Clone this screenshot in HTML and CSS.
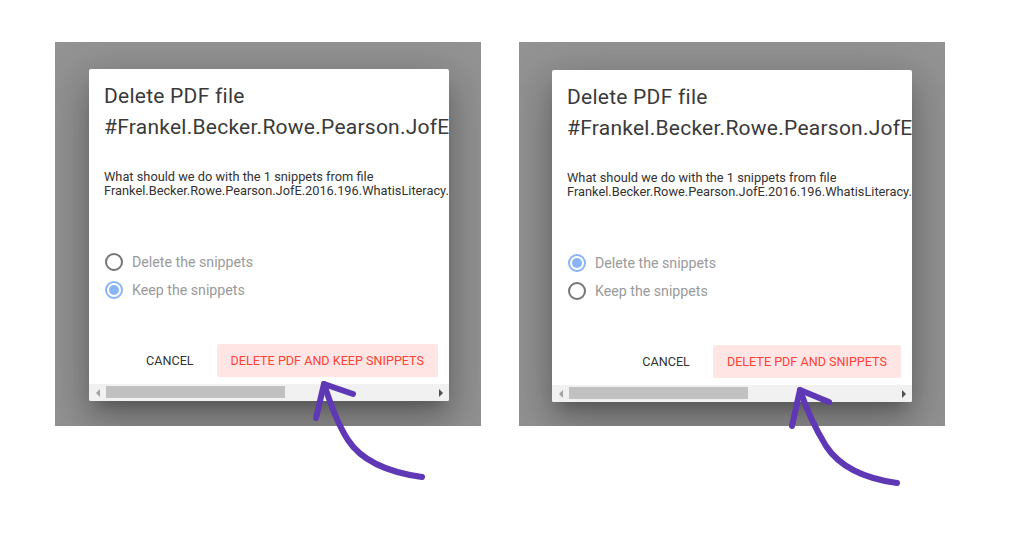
FILE: index.html
```html
<!DOCTYPE html>
<html>
<head>
<meta charset="utf-8">
<link rel="stylesheet" href="styles.css">
</head>
<body>
<div class="stage">
  <div class="panel panel-a">
    <div class="dialog">
      <div class="content">
        <div class="title">Delete PDF file<br>#Frankel.Becker.Rowe.Pearson.JofE.2016.196.WhatisLiteracy..pdf</div>
        <div class="msg">What should we do with the 1 snippets from file<br>Frankel.Becker.Rowe.Pearson.JofE.2016.196.WhatisLiteracy..pdf?</div>
        <div class="options">
          <div class="opt"><span class="radio"></span><span class="label">Delete the snippets</span></div>
          <div class="opt"><span class="radio on"></span><span class="label">Keep the snippets</span></div>
        </div>
        <div class="actions">
          <span class="btn cancel">CANCEL</span>
          <span class="btn danger">DELETE PDF AND KEEP SNIPPETS</span>
        </div>
      </div>
      <div class="scrollbar">
        <span class="sb-btn"><span class="tri-left"></span></span>
        <span class="track"><span class="thumb"></span></span>
        <span class="sb-btn"><span class="tri-right"></span></span>
      </div>
    </div>
  </div>
  <div class="panel panel-b">
    <div class="dialog">
      <div class="content">
        <div class="title">Delete PDF file<br>#Frankel.Becker.Rowe.Pearson.JofE.2016.196.WhatisLiteracy..pdf</div>
        <div class="msg">What should we do with the 1 snippets from file<br>Frankel.Becker.Rowe.Pearson.JofE.2016.196.WhatisLiteracy..pdf?</div>
        <div class="options">
          <div class="opt"><span class="radio on"></span><span class="label">Delete the snippets</span></div>
          <div class="opt"><span class="radio"></span><span class="label">Keep the snippets</span></div>
        </div>
        <div class="actions">
          <span class="btn cancel">CANCEL</span>
          <span class="btn danger">DELETE PDF AND SNIPPETS</span>
        </div>
      </div>
      <div class="scrollbar">
        <span class="sb-btn"><span class="tri-left"></span></span>
        <span class="track"><span class="thumb"></span></span>
        <span class="sb-btn"><span class="tri-right"></span></span>
      </div>
    </div>
  </div>
</div>
<svg class="ink" width="1026" height="540" viewBox="0 0 1026 540">
  <g fill="none" stroke="#5f38b6" stroke-width="6" stroke-linecap="round" stroke-linejoin="round">
    <path d="M422,477 C386,472 361,460 348,440 C337,423 330,402 324,384"/>
    <path d="M316,418 L324,384 L353,394"/>
    <path d="M897,483 C861,478 839,466 826,446 C815,428 806,408 800,390"/>
    <path d="M792,426 L800,390 L829,402"/>
  </g>
</svg>
</body>
</html>
```
FILE: styles.css
```css
html, body {
  margin: 0;
  padding: 0;
  background: #fff;
}
body {
  width: 1026px;
  height: 540px;
  overflow: hidden;
  position: relative;
  font-family: Roboto, "Liberation Sans", sans-serif;
}
.stage {
  display: flex;
  gap: 38px;
  padding: 42px 0 0 55px;
}
.panel {
  width: 426px;
  height: 384px;
  background: #939393;
  box-sizing: border-box;
  overflow: hidden;
}
.panel-a { padding: 27px 0 0 34px; }
.panel-b { padding: 28px 0 0 33px; }
.dialog {
  width: 360px;
  height: 332px;
  background: #fff;
  border-radius: 2px;
  overflow: hidden;
  display: flex;
  flex-direction: column;
  box-shadow: 0 11px 15px -7px rgba(0,0,0,.25), 0 24px 38px 3px rgba(0,0,0,.16), 0 9px 46px 8px rgba(0,0,0,.14);
}
.content {
  flex: 1;
  min-height: 0;
  overflow: hidden;
  padding: 12px 0 0 15px;
  display: flex;
  flex-direction: column;
}
.title {
  font-size: 21px;
  line-height: 31px;
  letter-spacing: 0.25px;
  color: #3a3a3a;
  white-space: nowrap;
}
.msg {
  margin-top: 27px;
  font-size: 12.8px;
  line-height: 14px;
  color: #333;
  white-space: nowrap;
}
.options {
  margin-top: 50px;
  display: flex;
  flex-direction: column;
}
.opt {
  height: 28px;
  display: flex;
  align-items: center;
}
.radio {
  width: 14px;
  height: 14px;
  border: 2px solid #757575;
  border-radius: 50%;
  box-sizing: content-box;
  margin: 0 9px 0 1px;
  display: flex;
  align-items: center;
  justify-content: center;
}
.radio.on {
  border-color: #8ab4f8;
}
.radio.on::after {
  content: "";
  width: 10px;
  height: 10px;
  border-radius: 50%;
  background: #8ab4f8;
}
.label {
  font-size: 14.2px;
  color: #9a9a9a;
}
.actions {
  margin-top: 40px;
  display: flex;
  justify-content: flex-end;
  align-items: center;
  padding-right: 11px;
  gap: 9px;
}
.btn {
  height: 33px;
  display: flex;
  align-items: center;
  padding: 0 14px;
  font-size: 12.6px;
  font-weight: 400;
  white-space: nowrap;
  border-radius: 2px;
}
.cancel {
  color: #333;
}
.danger {
  color: #ff4136;
  background: #ffe6e5;
}
.scrollbar {
  height: 17px;
  flex: none;
  background: #f1f1f1;
  display: flex;
}
.sb-btn {
  width: 17px;
  height: 17px;
  display: flex;
  align-items: center;
  justify-content: center;
}
.track {
  flex: 1;
  padding-top: 2px;
}
.thumb {
  display: block;
  width: 179px;
  height: 12px;
  background: #c1c1c1;
}
.tri-left {
  width: 0;
  height: 0;
  border-top: 4px solid transparent;
  border-bottom: 4px solid transparent;
  border-right: 4px solid #a3a3a3;
}
.tri-right {
  width: 0;
  height: 0;
  border-top: 4px solid transparent;
  border-bottom: 4px solid transparent;
  border-left: 4px solid #505050;
}
.ink {
  position: absolute;
  left: 0;
  top: 0;
  pointer-events: none;
}
```
